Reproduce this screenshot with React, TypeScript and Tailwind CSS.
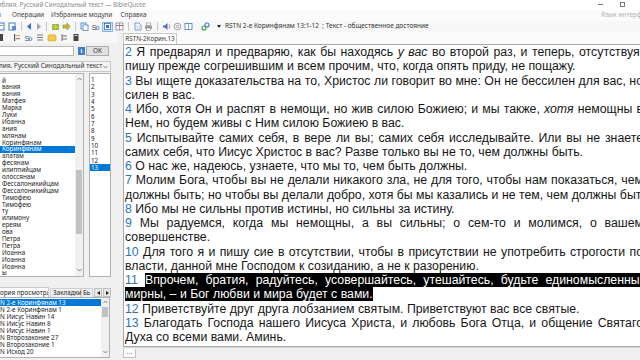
import React from "react";

type Part = { k: "t" | "n" | "i" | "h"; s: string };
const n = (s: string): Part => ({ k: "n", s });
const t = (s: string): Part => ({ k: "t", s });
const it = (s: string): Part => ({ k: "i", s });
const h = (s: string): Part => ({ k: "h", s });

const lines: { j: boolean; p: Part[] }[] = [
  { j: true, p: [n("2"), t(" Я предварял и предваряю, как бы находясь "), it("у вас"), t(" во второй раз, и теперь, отсутствуя,")] },
  { j: false, p: [t("пишу прежде согрешившим и всем прочим, что, когда опять приду, не пощажу.")] },
  { j: true, p: [n("3"), t(" Вы ищете доказательства на то, Христос ли говорит во мне: Он не бессилен для вас, но")] },
  { j: false, p: [t("силен в вас.")] },
  { j: true, p: [n("4"), t(" Ибо, хотя Он и распят в немощи, но жив силою Божиею; и мы также, "), it("хотя"), t(" немощны в")] },
  { j: false, p: [t("Нем, но будем живы с Ним силою Божиею в вас.")] },
  { j: true, p: [n("5"), t(" Испытывайте самих себя, в вере ли вы; самих себя исследывайте. Или вы не знаете")] },
  { j: false, p: [t("самих себя, что Иисус Христос в вас? Разве только вы не то, чем должны быть.")] },
  { j: false, p: [n("6"), t(" О нас же, надеюсь, узнаете, что мы то, чем быть должны.")] },
  { j: true, p: [n("7"), t(" Молим Бога, чтобы вы не делали никакого зла, не для того, чтобы нам показаться, чем")] },
  { j: false, p: [t("должны быть; но чтобы вы делали добро, хотя бы мы казались и не тем, чем должны быть.")] },
  { j: false, p: [n("8"), t(" Ибо мы не сильны против истины, но сильны за истину.")] },
  { j: true, p: [n("9"), t(" Мы радуемся, когда мы немощны, а вы сильны; о сем-то и молимся, о вашем")] },
  { j: false, p: [t("совершенстве.")] },
  { j: true, p: [n("10"), t(" Для того я и пишу сие в отсутствии, чтобы в присутствии не употребить строгости по")] },
  { j: false, p: [t("власти, данной мне Господом к созиданию, а не к разорению.")] },
  { j: true, p: [n("11"), t(" "), h(" Впрочем, братия, радуйтесь, усовершайтесь, утешайтесь, будьте единомысленны,")] },
  { j: false, p: [h("мирны, – и Бог любви и мира будет с вами.")] },
  { j: false, p: [n("12"), t(" Приветствуйте друг друга лобзанием святым. Приветствуют вас все святые.")] },
  { j: true, p: [n("13"), t(" Благодать Господа нашего Иисуса Христа, и любовь Бога Отца, и общение Святаго")] },
  { j: false, p: [t("Духа со всеми вами. Аминь.")] },
];

const books = [
  "й", "вания", "вания", "Матфея", "Марка", "Луки", "Иоанна", "ания", "млянам", "Коринфянам",
  "Коринфянам", "алатам", "фесянам", "илиппийцам", "олоссянам", "Фессалоникийцам", "Фессалоникийцам",
  "Тимофею", "Тимофею", "ту", "илимону", "ереям", "ова", "Петра", "Петра", "Иоанна", "Иоанна", "Иоанна", "ы",
];

const history = [
  "N 2-е Коринфянам 13",
  "N 2-е Коринфянам 1",
  "N Иисус Навин 14",
  "N Иисус Навин 8",
  "N Иисус Навин 1",
  "N Второзаконие 27",
  "N Второзаконие 1",
  "N Исход 20",
];

function Ico({ children, w = 9 }: { children: React.ReactNode; w?: number }) {
  return (
    <svg width={w} height={9} viewBox={`0 0 ${w} 9`} className="shrink-0">
      {children}
    </svg>
  );
}

function Sep() {
  return <div className="w-px h-[9px] bg-[#c8c8c8] mx-[2px] shrink-0" />;
}

export default function App() {
  return (
    <div className="w-[640px] h-[360px] overflow-hidden bg-[#f0f0f0] flex flex-col font-['Liberation_Sans',Arial,sans-serif] text-[#111]">
      {/* Title bar */}
      <div className="h-[10px] bg-white flex items-center relative shrink-0 overflow-hidden">
        <div className="text-[6.2px] text-[#8a8a8a] leading-none -ml-[6px] whitespace-nowrap font-['Noto_Sans',sans-serif]">
          библия. Русский Синодальный текст — BibleQuote
        </div>
        <div className="absolute left-[598px] top-[4px] w-[5px] h-px bg-[#777]" />
        <div className="absolute left-[620px] top-[2px] w-[5px] h-[5px] border border-[#777]" />
      </div>
      {/* Menu bar */}
      <div className="h-[11px] bg-[#fbfbfb] flex items-center shrink-0 relative text-[6.5px] leading-none text-[#444] font-['Noto_Sans',sans-serif] whitespace-nowrap overflow-hidden">
        <span className="-ml-[4px] w-[16px]">ы</span>
        <span>Операции</span>
        <span className="ml-[7px]">Избранные модули</span>
        <span className="ml-[8px]">Справка</span>
        <span className="absolute left-[601px] text-[#b0b0b0]">Язык интерфейса</span>
      </div>
      {/* Toolbar row 1 */}
      <div className="h-[11px] bg-[#f7f7f7] flex items-center shrink-0 gap-[2px] whitespace-nowrap">
        <div className="-ml-[3px] flex items-center gap-[2px]">
          <Ico><rect x="1" y="1" width="6" height="7" fill="#fff" stroke="#4a78b8" strokeWidth="1" /><rect x="2" y="3" width="4" height="1" fill="#7aa0d8" /></Ico>
          <Ico><rect x="1" y="1" width="6" height="7" fill="#fff" stroke="#4a78b8" strokeWidth="1" /><rect x="4" y="4" width="4" height="4" fill="#5a8ad0" /></Ico>
        </div>
        <Sep />
        <Ico w={7}><polygon points="5,1 1,4.5 5,8" fill="#2f6fd6" /></Ico>
        <Ico w={7}><polygon points="2,1 6,4.5 2,8" fill="#9aa6b6" /></Ico>
        <Sep />
        <Ico><rect x="1" y="2" width="7" height="6" rx="1" fill="#8dbb4a" /><path d="M2 5 L5 2 L5 4 L7 4 L7 6 L5 6 L5 8 Z" fill="#e6c23a" /></Ico>
        <Ico><path d="M1 3 L5 3 L5 1 L8 4.5 L5 8 L5 6 L1 6 Z" fill="#d9b32e" stroke="#6a9a30" strokeWidth="0.6" /></Ico>
        <Sep />
        <Ico><rect x="1" y="1" width="5" height="6" fill="#e8f0fb" stroke="#4a7cc0" strokeWidth="0.8" /><rect x="3" y="3" width="5" height="5.5" fill="#fff" stroke="#4a7cc0" strokeWidth="0.8" /></Ico>
        <Ico><text x="0.5" y="7.5" fontSize="8" fill="#555" fontFamily="Liberation Sans">S</text><circle cx="6.5" cy="6" r="1.6" fill="none" stroke="#3a70b8" strokeWidth="0.8" /></Ico>
        <div className="w-[11px] h-[10px] bg-[#cce4f7] border border-[#7fb6e6] flex items-center justify-center shrink-0">
          <svg width="7" height="7" viewBox="0 0 7 7"><rect x="0.5" y="0.5" width="6" height="6" fill="#fff" stroke="#3e6fb5" strokeWidth="0.8" /><rect x="2" y="2" width="3" height="3" fill="#3e6fb5" /></svg>
        </div>
        <Ico><rect x="1" y="1" width="7" height="7" fill="#fff" stroke="#7a86a0" strokeWidth="0.8" /><line x1="1" y1="3.5" x2="8" y2="3.5" stroke="#c04040" strokeWidth="0.8" /><line x1="4.5" y1="1" x2="4.5" y2="8" stroke="#7a86a0" strokeWidth="0.8" /></Ico>
        <Sep />
        <Ico><path d="M2 1 L6 1 L8 3 L8 8 L2 8 Z" fill="#fff" stroke="#5a82c0" strokeWidth="0.8" /><line x1="3" y1="4" x2="7" y2="4" stroke="#9ab" strokeWidth="0.6" /><line x1="3" y1="6" x2="7" y2="6" stroke="#9ab" strokeWidth="0.6" /></Ico>
        <Ico><rect x="1" y="3.5" width="7" height="3.5" rx="0.5" fill="#9aa0a8" /><rect x="2.5" y="1" width="4" height="2.5" fill="#fff" stroke="#888" strokeWidth="0.6" /><rect x="2.5" y="6" width="4" height="2.5" fill="#fff" stroke="#888" strokeWidth="0.6" /></Ico>
        <Sep />
        <Ico><polygon points="1,3.5 3,3.5 5.5,1 5.5,8 3,5.5 1,5.5" fill="#3b6fc0" /><path d="M7 2.5 Q8.5 4.5 7 6.5" stroke="#c04040" strokeWidth="0.7" fill="none" /></Ico>
        <Ico><circle cx="4.5" cy="4.5" r="3.3" fill="none" stroke="#888" strokeWidth="0.8" /><circle cx="4.5" cy="4.5" r="1.2" fill="none" stroke="#888" strokeWidth="0.7" /></Ico>
        <Ico><rect x="1" y="1.5" width="7" height="6" fill="#fff" stroke="#4a78b8" strokeWidth="0.8" /><line x1="4.5" y1="1.5" x2="4.5" y2="7.5" stroke="#4a78b8" strokeWidth="0.7" /></Ico>
        <div className="w-[4px]" />
        <Ico><circle cx="3" cy="6" r="2" fill="none" stroke="#3f9a3a" strokeWidth="1.1" /><circle cx="6" cy="3" r="2" fill="none" stroke="#3a78c8" strokeWidth="1.1" /></Ico>
        <div className="w-[2px]" />
        <Ico w={6}><polygon points="1,3 5,3 3,6" fill="#222" /></Ico>
        <span className="text-[6.5px] leading-none text-[#333] ml-[1px] font-['Noto_Sans',sans-serif]">
          RSTN 2-е Коринфянам 13:1-12&nbsp;&nbsp;; Текст - общественное достояние
        </span>
      </div>

      {/* Main */}
      <div className="flex flex-1 min-h-0">
        {/* Left panel */}
        <div className="w-[123px] shrink-0 flex flex-col font-['Noto_Sans',sans-serif]">
          {/* toolbar row 2 */}
          <div className="h-[11px] flex items-center gap-[3px] shrink-0 bg-[#f7f7f7] w-[118px]">
            <div className="w-[4px] h-[7px] bg-[#444] -ml-[1px]" />
            <div className="w-[4px]" />
            <Ico w={8}><rect x="1" y="1" width="1.2" height="7" fill="#555" /><rect x="3" y="2" width="4" height="1.2" fill="#d6a84a" /><rect x="3" y="5" width="4" height="1.2" fill="#888" /></Ico>
            <Ico w={9}><text x="0.5" y="7.5" fontSize="8" fill="#555" fontFamily="Liberation Sans">S</text><circle cx="6.5" cy="6" r="1.5" fill="none" stroke="#3a70b8" strokeWidth="0.8" /></Ico>
            <Ico w={8}><line x1="1" y1="2" x2="7" y2="2" stroke="#666" strokeWidth="0.9" /><line x1="1" y1="4.5" x2="7" y2="4.5" stroke="#666" strokeWidth="0.9" /><line x1="1" y1="7" x2="7" y2="7" stroke="#666" strokeWidth="0.9" /></Ico>
            <Ico w={10}><rect x="1" y="2" width="8" height="6" rx="1" fill="#f2c94c" stroke="#c9a030" strokeWidth="0.6" /><rect x="2" y="1" width="3" height="2" fill="#f2c94c" /></Ico>
            <Ico w={9}><line x1="2" y1="1" x2="2" y2="8" stroke="#555" strokeWidth="0.8" /><line x1="2" y1="3" x2="7" y2="3" stroke="#555" strokeWidth="0.8" /><line x1="2" y1="6" x2="7" y2="6" stroke="#555" strokeWidth="0.8" /></Ico>
            <Ico w={8}><rect x="1.5" y="1" width="5" height="7" fill="#444" /><rect x="2.5" y="2" width="3" height="1" fill="#ddd" /></Ico>
          </div>
          {/* search */}
          <div className="h-[11px] mt-[2px] flex items-center shrink-0">
            <div className="w-[74px] h-[10px] bg-white border border-[#b8b8b8] border-l-0" />
            <div className="ml-[4px] w-[7px] h-[8px] bg-[#3e7fc9] text-white text-[6px] leading-[8px] text-center font-bold">i</div>
            <div className="ml-[1px] w-[23px] h-[10px] bg-[#e1e1e1] border border-[#adadad] text-[6.5px] leading-[8px] text-center text-[#333]">OK</div>
          </div>
          {/* dropdown */}
          <div className="mt-[5px] h-[11px] w-[111px] bg-[#f4f4f4] border border-[#c8c8c8] border-l-0 flex items-center shrink-0 relative">
            <span className="text-[6.5px] leading-none text-[#333] whitespace-nowrap -ml-[1px]">лия. Русский Синодальный текст</span>
            <svg className="absolute right-[2px] top-[3px]" width="5" height="4" viewBox="0 0 5 4"><path d="M0.5 1 L2.5 3 L4.5 1" fill="none" stroke="#555" strokeWidth="0.7" /></svg>
          </div>
          {/* lists */}
          <div className="mt-[1px] h-[204px] flex shrink-0">
            <div className="w-[84px] h-full bg-white border border-[#b0b0b0] border-l-0 flex overflow-hidden">
              <div className="flex-1 pt-[3.5px] overflow-hidden">
                {books.map((b, i) => (
                  <div
                    key={i}
                    className={`h-[6.9px] leading-[6.9px] text-[6.3px] whitespace-nowrap pl-[2px] ${i === 10 ? "bg-[#0078d7] text-white" : "text-[#222]"}`}
                  >
                    {b}
                  </div>
                ))}
              </div>
              <div className="w-[8px] h-full bg-[#f0f0f0] flex flex-col items-center relative">
                <svg className="mt-[3px]" width="5" height="4" viewBox="0 0 5 4"><path d="M0.5 3 L2.5 1 L4.5 3" fill="none" stroke="#555" strokeWidth="0.7" /></svg>
                <div className="absolute top-[96px] left-[1px] w-[6px] h-[64px] bg-[#c2c2c2]" />
                <svg className="absolute bottom-[4px]" width="5" height="4" viewBox="0 0 5 4"><path d="M0.5 1 L2.5 3 L4.5 1" fill="none" stroke="#555" strokeWidth="0.7" /></svg>
              </div>
            </div>
            <div className="ml-[5px] w-[22px] h-full bg-white border border-[#b0b0b0] pt-[2px] overflow-hidden">
              {Array.from({ length: 13 }, (_, i) => (
                <div
                  key={i}
                  className={`h-[7.33px] leading-[7.33px] text-[6.3px] pl-[1px] ${i === 12 ? "bg-[#0078d7] text-white" : "text-[#222]"}`}
                >
                  {i + 1}
                </div>
              ))}
            </div>
          </div>
          {/* tabs */}
          <div className="mt-[10px] h-[10px] flex items-end shrink-0 relative w-[112px]">
            <div className="h-[10px] w-[49px] bg-white border border-[#c8c8c8] border-b-0 border-l-0 text-[6.3px] leading-[9px] whitespace-nowrap overflow-hidden text-[#222]">
              ория просмотра
            </div>
            <div className="h-[9px] ml-[1px] w-[31px] bg-[#f0f0f0] border border-[#d0d0d0] border-b-0 text-[6.3px] leading-[8px] pl-[2px] text-[#222]">Закладки</div>
            <div className="h-[9px] w-[12px] bg-[#f0f0f0] border border-[#d0d0d0] border-b-0 text-[6.3px] leading-[8px] pl-[1px] overflow-hidden text-[#222]">Бь</div>
            <div className="absolute left-[94px] bottom-0 w-[8px] h-[9px] bg-[#e8e8e8] border border-[#c0c0c0] flex items-center justify-center">
              <svg width="3" height="4" viewBox="0 0 3 4"><polygon points="3,0 0,2 3,4" fill="#222" /></svg>
            </div>
            <div className="absolute left-[103px] bottom-0 w-[8px] h-[9px] bg-[#e8e8e8] border border-[#c0c0c0] flex items-center justify-center">
              <svg width="3" height="4" viewBox="0 0 3 4"><polygon points="0,0 3,2 0,4" fill="#222" /></svg>
            </div>
          </div>
          {/* history */}
          <div className="h-[61px] w-[110px] bg-white border border-[#b0b0b0] border-l-0 flex shrink-0 overflow-hidden">
            <div className="flex-1 pt-[0.5px] overflow-hidden">
              {history.map((r, i) => (
                <div
                  key={i}
                  className={`h-[7.14px] leading-[7.14px] text-[6.3px] whitespace-nowrap ${i === 0 ? "bg-[#0078d7] text-white" : "text-[#222]"}`}
                >
                  {r}
                </div>
              ))}
            </div>
            <div className="w-[8px] h-full bg-[#f0f0f0] relative flex flex-col items-center">
              <svg className="mt-[2px]" width="5" height="4" viewBox="0 0 5 4"><path d="M0.5 3 L2.5 1 L4.5 3" fill="none" stroke="#555" strokeWidth="0.7" /></svg>
              <div className="absolute top-[9px] left-[1px] w-[6px] h-[10px] bg-[#c2c2c2]" />
              <svg className="absolute bottom-[3px]" width="5" height="4" viewBox="0 0 5 4"><path d="M0.5 1 L2.5 3 L4.5 1" fill="none" stroke="#555" strokeWidth="0.7" /></svg>
            </div>
          </div>
        </div>

        {/* Right pane */}
        <div className="flex-1 flex flex-col min-w-0">
          <div className="h-[12px] bg-[#fafafa] flex items-end shrink-0">
            <div className="h-[11px] w-[54px] bg-white border border-[#c8c8c8] border-b-0 text-[6.3px] leading-[10px] text-[#333] text-center font-['Noto_Sans',sans-serif]">
              RSTN-2Корин.13
            </div>
          </div>
          <div className="h-[303px] bg-white border border-[#a8a8a8] border-r-0 shrink-0 overflow-hidden">
            <div className="w-[518px] ml-[1px] text-[12.3px] leading-[14.25px] text-[#161616]">
              {lines.map((l, i) => (
                <div
                  key={i}
                  className={l.j ? "h-[14.25px] text-justify [text-align-last:justify] [word-spacing:-2.5px] whitespace-nowrap" : "h-[14.25px] whitespace-nowrap"}
                >
                  {l.p.map((p, k) =>
                    p.k === "n" ? (
                      <span key={k} className="text-[#2e73b8]">{p.s}</span>
                    ) : p.k === "i" ? (
                      <span key={k} className="italic">{p.s}</span>
                    ) : p.k === "h" ? (
                      <span key={k} className="bg-black text-white">{p.s}</span>
                    ) : (
                      <span key={k}>{p.s}</span>
                    )
                  )}
                </div>
              ))}
            </div>
          </div>
          <div className="h-[13px] bg-[#f0f0f0] flex items-start shrink-0 border-t border-[#d8d8d8]">
            <div className="mt-[1px] w-[13px] h-[9px] bg-white border border-[#c0c0c0] border-t-0 text-[7px] leading-[5px] text-center text-[#333]">...</div>
          </div>
        </div>
      </div>
    </div>
  );
}
